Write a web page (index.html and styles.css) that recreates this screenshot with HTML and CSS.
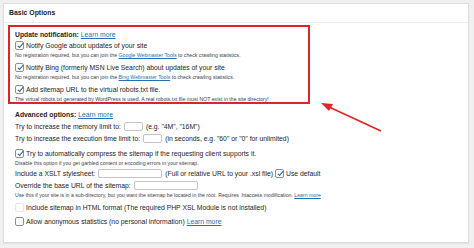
FILE: index.html
```html
<!DOCTYPE html>
<html>
<head>
<meta charset="utf-8">
<link rel="stylesheet" href="styles.css">
</head>
<body>
<div class="panel">
  <div class="panel-header">Basic Options</div>
  <div class="panel-body">
    <div class="highlight">
      <div class="row heading"><b>Update notification:</b> <a href="#">Learn more</a></div>
      <div class="row check first"><span class="cb on"></span>Notify Google about updates of your site</div>
      <div class="desc">No registration required, but you can join the <a href="#">Google Webmaster Tools</a> to check crawling statistics.</div>
      <div class="row check"><span class="cb on"></span>Notify Bing (formerly MSN Live Search) about updates of your site</div>
      <div class="desc">No registration required, but you can join the <a href="#">Bing Webmaster Tools</a> to check crawling statistics.</div>
      <div class="row check"><span class="cb on"></span>Add sitemap URL to the virtual robots.txt file.</div>
      <div class="desc">The virtual robots.txt generated by WordPress is used. A real robots.txt file must NOT exist in the site directory!</div>
    </div>
    <div class="plain">
      <div class="row heading adv"><b>Advanced options:</b> <a href="#">Learn more</a></div>
      <div class="row field">Try to increase the memory limit to: <span class="input w20"></span> (e.g. "4M", "16M")</div>
      <div class="row field">Try to increase the execution time limit to: <span class="input w20"></span> (in seconds, e.g. "60" or "0" for unlimited)</div>
      <div class="row check gap"><span class="cb on"></span>Try to automatically compress the sitemap if the requesting client supports it.</div>
      <div class="desc">Disable this option if you get garbled content or encoding errors in your sitemap.</div>
      <div class="row field">Include a XSLT stylesheet: <span class="input w64"></span> (Full or relative URL to your .xsl file) <span class="cb on inline"></span>Use default</div>
      <div class="row field">Override the base URL of the sitemap: <span class="input w64"></span></div>
      <div class="desc">Use this if your site is in a sub-directory, but you want the sitemap be located in the root. Requires .htaccess modification. <a href="#">Learn more</a></div>
      <div class="row check gap2"><span class="cb disabled"></span>Include sitemap in HTML format (The required PHP XSL Module is not installed)</div>
      <div class="row check gap3"><span class="cb"></span>Allow anonymous statistics (no personal information) <a href="#">Learn more</a></div>
    </div>
  </div>
</div>
<svg class="arrow" width="474" height="248" viewBox="0 0 474 248">
  <line x1="381" y1="131" x2="327" y2="106" stroke="#e0262b" stroke-width="1.8"/>
  <polygon points="321,103 333,104 329,111" fill="#e0262b"/>
</svg>
</body>
</html>
```
FILE: styles.css
```css
html, body {
  margin: 0;
  padding: 0;
}
body {
  background: #f0f0f1;
  width: 474px;
  height: 248px;
  padding: 3px 0 0 3px;
  box-sizing: border-box;
  font-family: "Liberation Sans", Arial, Helvetica, sans-serif;
  color: #1d2327;
  position: relative;
  overflow: hidden;
}
.panel {
  width: 466px;
  height: 240px;
  background: #fff;
  border: 1px solid #dcdcde;
  box-sizing: border-box;
  box-shadow: 0 1px 1px rgba(0,0,0,0.05);
}
.panel-header {
  height: 18px;
  line-height: 18px;
  padding-left: 5px;
  font-size: 6.9px;
  font-weight: bold;
  border-bottom: 1px solid #ececec;
}
.panel-body {
  padding: 2px 0 0 4px;
}
.highlight {
  width: 302px;
  height: 79px;
  border: 2px solid #d9262c;
  box-sizing: border-box;
  padding: 2px 0 0 5px;
}
.row {
  font-size: 6.8px;
  display: flex;
  align-items: center;
  white-space: nowrap;
}
.heading {
  height: 10px;
}
.check {
  height: 11px;
  margin-top: 3px;
}
.check.first {
  margin-top: 1px;
}
.desc {
  font-size: 5.2px;
  color: #3c434a;
  height: 8px;
  line-height: 8px;
  white-space: nowrap;
}
.plain {
  padding-left: 7px;
}
.adv {
  margin-top: 5px;
}
.field {
  height: 10px;
  margin-top: 2px;
}
.gap {
  margin-top: 4.5px;
}
.gap2 {
  margin-top: 3.5px;
}
.gap3 {
  margin-top: 2.5px;
}
a {
  color: #2271b1;
  text-decoration: underline;
}
.row a {
  margin-left: 2px;
}
.cb {
  width: 9px;
  height: 9px;
  border: 1px solid #8c8f94;
  border-radius: 2px;
  box-sizing: border-box;
  margin-right: 2px;
  flex: none;
  position: relative;
  background: #fff;
}
.cb.on::after {
  content: "";
  position: absolute;
  left: 2.5px;
  top: 0.2px;
  width: 2.4px;
  height: 4.8px;
  border: solid #1e5e96;
  border-width: 0 1.4px 1.4px 0;
  transform: rotate(40deg);
}
.cb.disabled {
  border-color: #e6e6e6;
}
.cb.inline {
  margin-left: 2px;
}
.input {
  display: inline-block;
  height: 9px;
  border: 1px solid #c3c4c7;
  border-radius: 2px;
  box-sizing: border-box;
  margin: 0 3px;
  flex: none;
}
.w20 { width: 19px; }
.w64 { width: 64px; }
.arrow {
  position: absolute;
  left: 0;
  top: 0;
  pointer-events: none;
}
```
